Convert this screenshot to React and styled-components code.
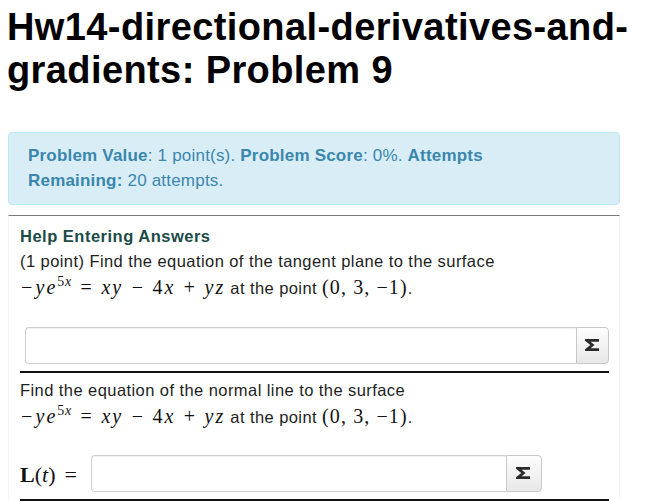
import styled, { createGlobalStyle } from "styled-components";

const GlobalStyle = createGlobalStyle`
  html, body {
    margin: 0;
    padding: 0;
    background: #fff;
    overflow: hidden;
  }
  body {
    font-family: "Liberation Sans", Arial, sans-serif;
    color: #222;
  }
`;

const SigmaIcon = () => (
  <svg width="15" height="12" viewBox="0 0 15 12" aria-hidden="true">
    <path
      d="M14 1.4H1.7L7.4 6L1.7 10.6H14"
      fill="none"
      stroke="#2b2b2b"
      strokeWidth="2.7"
      strokeLinejoin="miter"
    />
  </svg>
);

const AnswerInput = ({ width }) => (
  <Field>
    <TextBox style={{ width }} />
    <SigmaButton type="button">
      <SigmaIcon />
    </SigmaButton>
  </Field>
);

const Surface = () => (
  <>
    <M>
      <V>−y</V>
      <V>e</V>
      <Sup>
        5<V>x</V>
      </Sup>
      <Rel>=</Rel>
      <V>xy</V>
      <Rel>−</Rel>4<V>x</V>
      <Rel>+</Rel>
      <V>yz</V>
    </M>{" "}
    at the point <M $tight>(0, 3, −1)</M>.
  </>
);

const App = () => {
  return (
    <>
      <GlobalStyle />
      <Page>
        <Title>Hw14-directional-derivatives-and-gradients: Problem 9</Title>

        <Alert>
          <b>Problem Value</b>: 1 point(s). <b>Problem Score</b>: 0%.{" "}
          <b>Attempts</b>
          <br />
          <b>Remaining:</b> 20 attempts.
        </Alert>

        <ProblemBody>
          <Part>
            <HelpLink>Help Entering Answers</HelpLink>
            <TextLine>
              (1 point) Find the equation of the tangent plane to the surface
            </TextLine>
            <MathLine>
              <Surface />
            </MathLine>
            <AnswerBlock>
              <AnswerInput width="594px" />
            </AnswerBlock>
          </Part>

          <Part $second>
            <TextLine>Find the equation of the normal line to the surface</TextLine>
            <MathLine>
              <Surface />
            </MathLine>
            <AnswerRow>
              <Label>
                <Bold>L</Bold>(<V>t</V>)<LabelEq>=</LabelEq>
              </Label>
              <AnswerInput width="415px" />
            </AnswerRow>
          </Part>
        </ProblemBody>
      </Page>
    </>
  );
};

export default App;

const Page = styled.div`
  width: 654px;
  padding: 6px 8px 0;
`;

const Title = styled.h1`
  margin: 0 0 0 -1px;
  font-size: 38px;
  line-height: 43px;
  letter-spacing: 0.4px;
  font-weight: bold;
  color: #000;
`;

const Alert = styled.div`
  box-sizing: border-box;
  width: 612px;
  margin-top: 39.5px;
  padding: 10px 19px 11px;
  background: #d9edf7;
  border: 1px solid #bce8f1;
  border-radius: 4px;
  color: #3a87ad;
  font-size: 17px;
  line-height: 25px;
  letter-spacing: 0.2px;
`;

const ProblemBody = styled.div`
  box-sizing: border-box;
  width: 612px;
  margin-top: 10px;
  padding: 8px 10px 0 11px;
  border: 1px solid #f4f4f4;
  border-top: 1px solid #7a7a7a;
  border-bottom: none;
`;

const Part = styled.div`
  padding-top: ${(p) => (p.$second ? "5px" : "0")};
  padding-bottom: 7px;
  border-bottom: 2px solid #111;
`;

const TextLine = styled.div`
  font-size: 16.5px;
  line-height: 25px;
  letter-spacing: 0.43px;
  color: #1e1e1e;
  white-space: nowrap;
`;

const HelpLink = styled(TextLine)`
  font-weight: bold;
  letter-spacing: 0.5px;
  color: #1c4b47;
`;

const MathLine = styled(TextLine)`
  line-height: 29px;
`;

const M = styled.span`
  font-family: "Liberation Serif", "DejaVu Serif", serif;
  font-size: 20px;
  line-height: 1;
  letter-spacing: ${(p) => (p.$tight ? "1.1px" : "2px")};
  color: #111;
`;

const V = styled.i`
  font-family: "Liberation Serif", "DejaVu Serif", serif;
  font-style: italic;
`;

const Bold = styled.b`
  font-family: "Liberation Serif", "DejaVu Serif", serif;
  font-weight: bold;
`;

const Sup = styled.sup`
  font-size: 14px;
  line-height: 0;
  vertical-align: 8px;
  letter-spacing: 0.8px;
`;

const Rel = styled.span`
  margin: 0 7.5px 0 8.5px;
`;

const AnswerBlock = styled.div`
  margin-top: 24px;
  margin-left: 5px;
`;

const AnswerRow = styled.div`
  display: flex;
  align-items: center;
  gap: 10.7px;
  margin-top: 23px;
`;

const Label = styled.span`
  display: inline-block;
  width: 60px;
  padding-top: 4px;
  font-family: "Liberation Serif", "DejaVu Serif", serif;
  font-size: 22px;
  color: #111;
  white-space: nowrap;
`;

const LabelEq = styled.span`
  margin-left: 9px;
`;

const Field = styled.div`
  display: flex;
  height: 37px;
`;

const TextBox = styled.div`
  box-sizing: border-box;
  height: 37px;
  background: #fff;
  border: 1px solid #cfcfcf;
  border-right: none;
  border-radius: 4px 0 0 4px;
  box-shadow: inset 0 1px 1px rgba(0, 0, 0, 0.06);
`;

const SigmaButton = styled.button`
  box-sizing: border-box;
  width: 36px;
  height: 37px;
  padding: 0;
  display: flex;
  align-items: center;
  justify-content: center;
  background: linear-gradient(#fdfdfd, #e8e8e8);
  border: 1px solid #c8c8c8;
  border-radius: 0 4px 4px 0;
`;
